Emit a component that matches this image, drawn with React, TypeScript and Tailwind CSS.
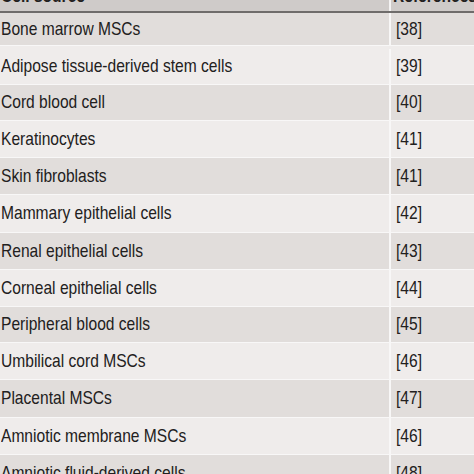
const rows: { source: string; ref: string; h: string }[] = [
  { source: 'Bone marrow MSCs', ref: '[38]', h: 'h-[33px]' },
  { source: 'Adipose tissue-derived stem cells', ref: '[39]', h: 'h-[39px] pt-[3px]' },
  { source: 'Cord blood cell', ref: '[40]', h: 'h-[36px]' },
  { source: 'Keratinocytes', ref: '[41]', h: 'h-[37px]' },
  { source: 'Skin fibroblasts', ref: '[41]', h: 'h-[37px]' },
  { source: 'Mammary epithelial cells', ref: '[42]', h: 'h-[38px]' },
  { source: 'Renal epithelial cells', ref: '[43]', h: 'h-[37px]' },
  { source: 'Corneal epithelial cells', ref: '[44]', h: 'h-[37px]' },
  { source: 'Peripheral blood cells', ref: '[45]', h: 'h-[36px]' },
  { source: 'Umbilical cord MSCs', ref: '[46]', h: 'h-[37px]' },
  { source: 'Placental MSCs', ref: '[47]', h: 'h-[38px]' },
  { source: 'Amniotic membrane MSCs', ref: '[46]', h: 'h-[37px]' },
  { source: 'Amniotic fluid-derived cells', ref: '[48]', h: 'h-[37px]' },
]

export default function App() {
  return (
    <div
      className="w-[474px] h-[474px] overflow-hidden bg-[#f7f6f6] text-[#222020] text-[19px]"
      style={{ fontFamily: '"Liberation Sans", Arial, sans-serif' }}
    >
      <div className="-mt-[18px] flex h-[31px] items-center bg-[#cfcbc9] border-b-2 border-[#6f6c6b] font-bold">
        <div className="w-[389px] shrink-0 pl-[1px]">
          <span className="inline-block origin-left scale-x-[0.82] whitespace-nowrap">Cell source</span>
        </div>
        <div className="w-[2px] shrink-0 self-stretch bg-[#f4f3f3]" />
        <div className="flex-1 min-w-0 pl-[2px] whitespace-nowrap">
          <span className="inline-block origin-left scale-x-[0.82]">References</span>
        </div>
      </div>
      {rows.map((r, i) => (
        <div
          key={i}
          className={`flex items-center border-b border-[#f8f7f7] ${r.h} ${i % 2 === 0 ? 'bg-[#e1dddb]' : 'bg-[#efeceb]'}`}
        >
          <div className="w-[389px] shrink-0 pl-[1px]">
            <span className="inline-block origin-left scale-x-[0.82] whitespace-nowrap">{r.source}</span>
          </div>
          <div className="w-[2px] shrink-0 self-stretch bg-[#f8f7f7]" />
          <div className="flex-1 min-w-0 pl-[5px]">
            <span className="inline-block origin-left scale-x-[0.82]">{r.ref}</span>
          </div>
        </div>
      ))}
    </div>
  )
}
